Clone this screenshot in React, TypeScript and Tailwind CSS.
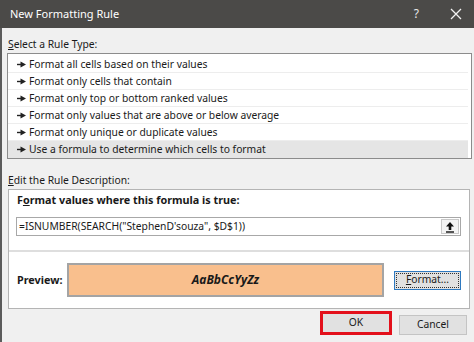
import React from "react";

const rules = [
  "Format all cells based on their values",
  "Format only cells that contain",
  "Format only top or bottom ranked values",
  "Format only values that are above or below average",
  "Format only unique or duplicate values",
  "Use a formula to determine which cells to format",
];

function Pointer() {
  return (
    <svg width="9" height="7" viewBox="0 0 9 7" className="shrink-0">
      <path d="M0 3.5h4" stroke="#222" strokeWidth="1.4" />
      <path d="M3.5 0.5L9 3.5L3.5 6.5Z" fill="#222" />
    </svg>
  );
}

function UploadIcon() {
  return (
    <svg width="10" height="12" viewBox="0 0 10 12">
      <path d="M5 1L9 5.5H6.3V9H3.7V5.5H1Z" fill="#111" />
      <path d="M1 11h8" stroke="#111" strokeWidth="1.4" />
    </svg>
  );
}

export default function App() {
  return (
    <div
      className="w-[474px] h-[342px] overflow-hidden bg-[#f0f0f0] text-[#1a1a1a] flex flex-col"
      style={{ fontFamily: '"Segoe UI", "Noto Sans", "Open Sans", sans-serif' }}
    >
      <div className="h-[28px] shrink-0 bg-[#4b4a48] flex items-center pl-[10px] pr-[12px] text-white text-[11px]">
        <span>New Formatting Rule</span>
        <span className="ml-auto mr-[31px] text-[12px] text-[#e8e8e8]">?</span>
        <svg width="12" height="12" viewBox="0 0 12 12">
          <path d="M1 1L11 11M11 1L1 11" stroke="#f2f2f2" strokeWidth="1.3" />
        </svg>
      </div>

      <div className="flex-1 flex flex-col border-l-2 border-[#5b5b5b] pl-[5px] pr-[2px] text-[10.3px]">
        <div className="h-[25px] flex items-end pb-[1px] pl-[1px]">
          <span>
            <span className="underline">S</span>elect a Rule Type:
          </span>
        </div>

        <div className="border border-[#8c8c8c] bg-white pt-[2px] pr-[3px]">
          {rules.map((r, i) => (
            <div
              key={r}
              className={
                "h-[17px] flex items-center gap-[3px] pl-[9px] border-b " +
                (i === rules.length - 1
                  ? "bg-[#e5e5e5] border-transparent"
                  : "border-[#ededed]")
              }
            >
              <Pointer />
              <span className="leading-none">{r}</span>
            </div>
          ))}
        </div>

        <div className="h-[30px] flex items-end pb-[1px] pl-[1px]">
          <span>
            <span className="underline">E</span>dit the Rule Description:
          </span>
        </div>

        <div className="ml-[1px] mr-[2px] h-[120px] border border-[#b4b4b4] bg-white flex flex-col">
          <div className="pt-[2px] pl-[8px] font-bold text-[10.8px] h-[18px] flex items-center">
            <span>
              F<span className="underline">o</span>rmat values where this formula is true:
            </span>
          </div>
          <div className="mt-[9px] ml-[7px] mr-[8px] h-[19px] border border-[#a8a8a8] flex items-center pl-[2px]">
            <span>=ISNUMBER(SEARCH("StephenD'souza", $D$1))</span>
            <div className="ml-auto mr-[1px] w-[18px] h-[15px] border border-[#c8c8c8] bg-[#f4f4f4] flex items-center justify-center">
              <UploadIcon />
            </div>
          </div>
          <div className="mt-[14px] h-[2px] bg-[#dedede]" />
          <div className="flex-1 flex items-center pl-[8px]">
            <span className="font-bold text-[10.8px] w-[50px]">Preview:</span>
            <div className="w-[317px] h-[34px] border-2 border-[#a4a4a4] bg-[#f9bf8d] flex items-center justify-center font-bold italic text-[12px]">
              AaBbCcYyZz
            </div>
            <div className="ml-[10px] w-[67px] h-[19px] border border-[#2e79c0] bg-[#e1e1e1] p-[1px]">
              <div className="w-full h-full border border-dotted border-[#333] flex items-center justify-center">
                <span>
                  <span className="underline">F</span>ormat...
                </span>
              </div>
            </div>
          </div>
        </div>

        <div className="flex items-start mt-[2px]">
          <div className="ml-auto w-[72px] h-[24px] border-[3px] border-[#e3101b] bg-[#e1e1e1] flex items-center justify-center">
            OK
          </div>
          <div className="ml-[7px] mr-[5px] mt-[4px] w-[68px] h-[20px] border border-[#c4c4c4] bg-[#e1e1e1] flex items-center justify-center">
            Cancel
          </div>
        </div>
      </div>
    </div>
  );
}
